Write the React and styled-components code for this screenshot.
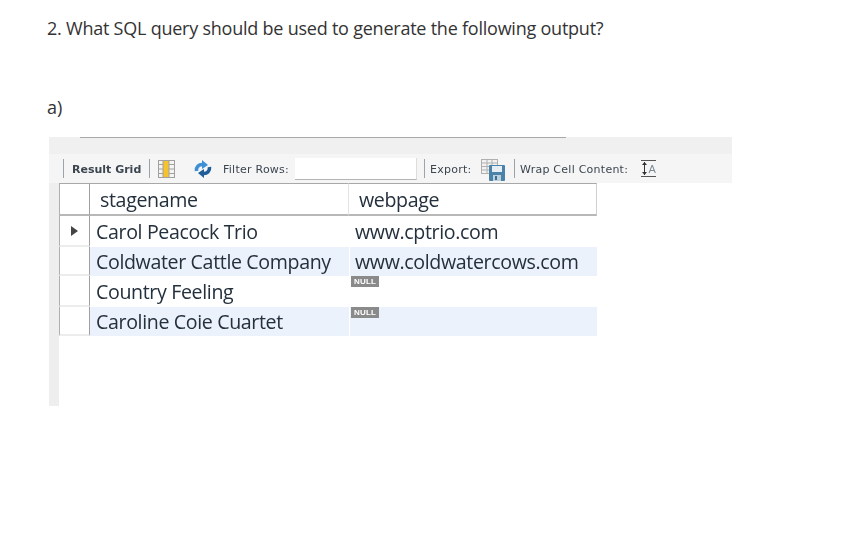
import React from 'react'
import styled, { createGlobalStyle } from 'styled-components'

const GlobalStyle = createGlobalStyle`
  html, body {
    margin: 0;
    padding: 0;
    background: #fff;
  }
  body {
    font-family: "Open Sans", "Noto Sans", sans-serif;
    overflow: hidden;
  }
`
const Page = styled.div`
  width: 856px;
  height: 545px;
  padding: 15px 0 0 47px;
  box-sizing: border-box;
`
const Question = styled.div`
  font-size: 18px;
  letter-spacing: -0.23px;
  line-height: 27px;
  color: #333;
  white-space: nowrap;
`
const Option = styled.div`
  font-size: 18px;
  line-height: 27px;
  color: #333;
  margin-top: 52px;
`
const Shot = styled.div`
  width: 683px;
  margin: 16px 0 0 2px;
  height: 269px;
  display: flex;
  flex-direction: column;
  background: #fff;
  filter: blur(0.3px);
`
const TopBand = styled.div`
  height: 17px;
  flex: none;
  background: #f0f0f0;
  padding-left: 31px;
`
const Rule = styled.div`
  width: 486px;
  height: 1px;
  background: #a8a8a8;
`
const Toolbar = styled.div`
  height: 29px;
  flex: none;
  display: flex;
  align-items: center;
  background: #f5f5f5;
  padding-left: 14px;
  font-family: "DejaVu Sans", sans-serif;
  font-size: 11px;
  color: #3c4650;
`
const Sep = styled.div`
  width: 1px;
  height: 19px;
  flex: none;
  background: #9aa4ac;
  margin-left: ${p => p.$ml || 0}px;
`
const Label = styled.span`
  margin-left: ${p => p.$ml || 0}px;
  margin-top: 2px;
  width: ${p => p.$w}px;
  flex: none;
  white-space: nowrap;
  font-weight: ${p => (p.$bold ? 700 : 400)};
  letter-spacing: ${p => (p.$bold ? '0' : '0.25px')};
`
const Slot = styled.div`
  display: flex;
  flex: none;
  margin-left: ${p => p.$ml || 0}px;
  margin-top: ${p => p.$mt || 0}px;
`
const FilterInput = styled.div`
  width: 122px;
  height: 22px;
  flex: none;
  margin-left: 6px;
  background: #fff;
  box-sizing: border-box;
  border-bottom: 1px solid #b4b4b4;
  border-right: 1px solid #dcdcdc;
`
const Body = styled.div`
  flex: 1;
  display: flex;
  min-height: 0;
`
const Strip = styled.div`
  width: 10px;
  flex: none;
  background: #eeeeee;
`
const Grid = styled.div`
  display: grid;
  grid-template-columns: 31px 259px 248px;
  grid-template-rows: 33px 31px 29px 31px 29px;
  align-self: flex-start;
  font-size: 19.6px;
  letter-spacing: -0.36px;
  color: #24303c;
`
const Gutter = styled.div`
  display: flex;
  align-items: center;
  justify-content: center;
  box-sizing: border-box;
  border-left: 1px solid #b0b0b0;
  border-right: 1px solid #a0a0a0;
  border-top: ${p => (p.$head ? '1px solid #a8a8a8' : '0')};
  border-bottom: 2px solid ${p => (p.$head ? '#b8b8b8' : '#ececec')};
`
const Marker = styled.div`
  width: 0;
  height: 0;
  border-left: 7px solid #444;
  border-top: 5px solid transparent;
  border-bottom: 5px solid transparent;
  margin-right: 1px;
`
const HeadCell = styled.div`
  display: flex;
  align-items: center;
  box-sizing: border-box;
  padding-left: 10px;
  border-top: 1px solid #a8a8a8;
  border-bottom: 2px solid #b8b8b8;
  border-right: 1px solid ${p => (p.$last ? '#cfcfcf' : '#e4e4e4')};
`
const Cell = styled.div`
  display: flex;
  align-items: ${p => (p.$null ? 'flex-start' : 'center')};
  box-sizing: border-box;
  padding-left: ${p => (p.$null ? 1 : p.$second ? 5 : 6)}px;
  white-space: nowrap;
  background: ${p => (p.$alt ? '#ebf2fc' : '#fff')};
  border-left: ${p => (p.$second ? '1px solid #fff' : '0')};
`
const NullTag = styled.span`
  width: 28px;
  height: 11px;
  background: #8a8a8a;
  color: #fff;
  font-family: "Liberation Sans", sans-serif;
  font-size: 8px;
  font-weight: 700;
  line-height: 11px;
  text-align: center;
  letter-spacing: 0.2px;
`

const GridIcon = () => (
  <svg width="17" height="18" viewBox="0 0 17 18">
    <rect x="0.5" y="0.5" width="16" height="17" fill="#f4f4f4" stroke="#a0a0a0" />
    <rect x="5" y="1" width="6" height="16" fill="#f6c32c" />
    <path d="M0.5 4.5H5M0.5 9H5M0.5 13.5H5M11 4.5H16.5M11 9H16.5M11 13.5H16.5M5 0.5V17.5M11 0.5V17.5" stroke="#a0a0a0" fill="none" />
  </svg>
)

const RefreshIcon = () => (
  <svg width="20" height="18" viewBox="1 0 18 18">
    <path d="M3.5 11 C3 7 6 4 10 4.5" fill="none" stroke="#3d8fd6" strokeWidth="3.6" />
    <path d="M9 0 L15 5 L9 9 Z" fill="#3d8fd6" />
    <path d="M16.5 7 C17 11 14 14 10 13.5" fill="none" stroke="#1f5f99" strokeWidth="3.6" />
    <path d="M11 9 L5 13 L11 18 Z" fill="#1f5f99" />
  </svg>
)

const ExportIcon = () => (
  <svg width="24" height="22" viewBox="0 0 24 22">
    <rect x="0.5" y="0.5" width="16" height="14" fill="#f2f2f2" stroke="#b0b0b0" />
    <path d="M0.5 4H16.5M0.5 7.5H16.5M0.5 11H16.5M6 0.5V14.5M11 0.5V14.5" stroke="#b0b0b0" fill="none" />
    <rect x="8" y="6" width="16" height="16" rx="1" fill="#4a82aa" />
    <rect x="11" y="7" width="10" height="6" fill="#e6eef4" />
    <rect x="12" y="16" width="8" height="6" fill="#bfd0dd" />
    <rect x="14" y="17" width="2" height="4" fill="#3f6f92" />
  </svg>
)

const WrapIcon = () => (
  <svg width="15" height="17" viewBox="0 0 15 17">
    <path d="M0 0.5H15M0 16.5H15" stroke="#555" fill="none" />
    <path d="M3.5 2V15" stroke="#333" fill="none" />
    <path d="M1 5L3.5 2L6 5ZM1 12L3.5 15L6 12Z" fill="#333" />
    <text x="7.5" y="13" fontFamily="Liberation Sans, sans-serif" fontSize="11" fill="#7c8a96">A</text>
  </svg>
)

const rows = [
  ['Carol Peacock Trio', 'www.cptrio.com'],
  ['Coldwater Cattle Company', 'www.coldwatercows.com'],
  ['Country Feeling', null],
  ['Caroline Coie Cuartet', null]
]

export default () => {
  return (
    <Page>
      <GlobalStyle />
      <Question>2. What SQL query should be used to generate the following output?</Question>
      <Option>a)</Option>
      <Shot>
        <TopBand>
          <Rule />
        </TopBand>
        <Toolbar>
          <Sep />
          <Label $bold $ml={8} $w={69}>Result Grid</Label>
          <Sep $ml={8} />
          <Slot $ml={8}><GridIcon /></Slot>
          <Slot $ml={18}><RefreshIcon /></Slot>
          <Label $ml={10} $w={66}>Filter Rows:</Label>
          <FilterInput />
          <Sep $ml={7} />
          <Label $ml={5} $w={42}>Export:</Label>
          <Slot $ml={9} $mt={3}><ExportIcon /></Slot>
          <Sep $ml={9} />
          <Label $ml={5} $w={109}>Wrap Cell Content:</Label>
          <Slot $ml={12}><WrapIcon /></Slot>
        </Toolbar>
        <Body>
          <Strip />
          <Grid>
            <Gutter $head />
            <HeadCell>stagename</HeadCell>
            <HeadCell $last>webpage</HeadCell>
            {rows.map((r, i) => (
              <React.Fragment key={r[0]}>
                <Gutter>{i === 0 && <Marker />}</Gutter>
                <Cell $alt={i % 2 === 1}>{r[0]}</Cell>
                <Cell $second $alt={i % 2 === 1} $null={!r[1]}>
                  {r[1] || <NullTag>NULL</NullTag>}
                </Cell>
              </React.Fragment>
            ))}
          </Grid>
        </Body>
      </Shot>
    </Page>
  )
}
